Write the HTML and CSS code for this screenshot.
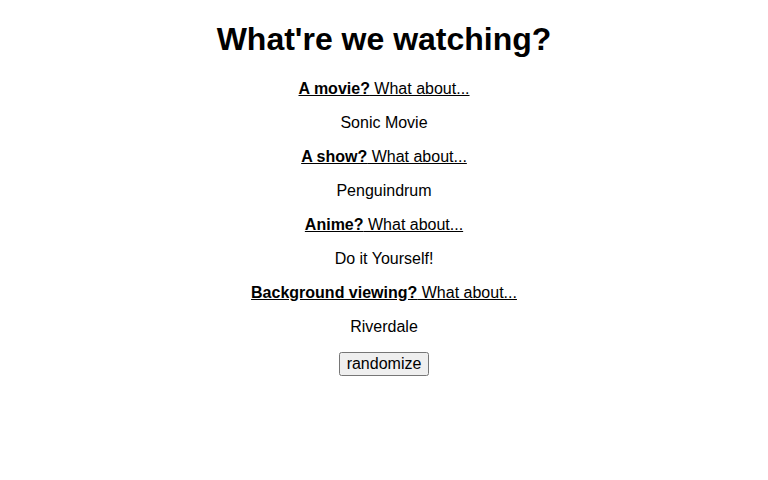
FILE: index.html
```html
<!DOCTYPE html>
<html>

<head>
    <title>What're we watching?</title>
    <link rel="stylesheet" href="styles.css">
</head>

<body>
    <h1>What're we watching?</h1>

    <p class="prompt"><b>A movie?</b> What about...</p>
    <p class="pick">Sonic Movie</p>

    <p class="prompt"><b>A show?</b> What about...</p>
    <p class="pick">Penguindrum</p>

    <p class="prompt"><b>Anime?</b> What about...</p>
    <p class="pick">Do it Yourself!</p>

    <p class="prompt"><b>Background viewing?</b> What about...</p>
    <p class="pick">Riverdale</p>

    <button class="randomize-button">randomize</button>
</body>

</html>
```

FILE: styles.css
```css
body {
    font-family: 'Liberation Sans', Arial, sans-serif;
    text-align: center;
    color: #000;
}

h1 {
    font-size: 32px;
    margin: 13px 0 22px;
}

.prompt {
    text-decoration: underline;
}

.randomize-button {
    font-family: 'Liberation Sans', Arial, sans-serif;
    font-size: 16px;
}
```
